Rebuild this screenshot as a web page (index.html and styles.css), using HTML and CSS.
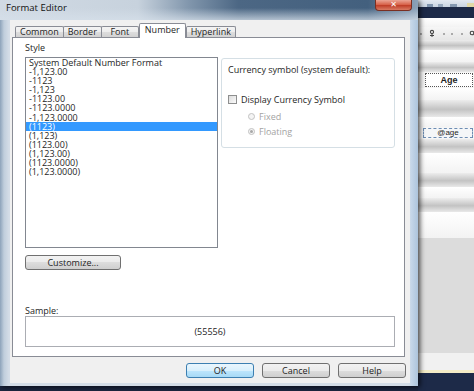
FILE: index.html
```html
<!DOCTYPE html>
<html>
<head>
<meta charset="utf-8">
<meta name="viewport" content="width=device-width, initial-scale=1.0">
<link rel="stylesheet" href="styles.css">
</head>
<body>

<div class="screen">

  <div class="dialog">
    <div class="titlebar">
      <span class="title">Format Editor</span>
      <div class="close">&#x2715;</div>
    </div>

    <div class="client">
      <div class="tabs">
        <div class="tab">Common</div>
        <div class="tab">Border</div>
        <div class="tab tab-font">Font</div>
        <div class="tab tab-active">Number</div>
        <div class="tab">Hyperlink</div>
      </div>

      <div class="panel">
        <div class="panel-top">
          <div class="style-col">
            <div class="label">Style</div>
            <div class="listbox">
              <div class="item">System Default Number Format</div>
              <div class="item">-1,123.00</div>
              <div class="item">-1123</div>
              <div class="item">-1,123</div>
              <div class="item">-1123.00</div>
              <div class="item">-1123.0000</div>
              <div class="item">-1,123.0000</div>
              <div class="item item-selected">(1123)</div>
              <div class="item">(1,123)</div>
              <div class="item">(1123.00)</div>
              <div class="item">(1,123.00)</div>
              <div class="item">(1123.0000)</div>
              <div class="item">(1,123.0000)</div>
            </div>
            <button class="btn btn-customize">Customize...</button>
          </div>

          <div class="group">
            <div class="group-title">Currency symbol (system default):</div>
            <div class="check"><span class="checkbox"></span>Display Currency Symbol</div>
            <div class="radio"><span class="radio-dot"></span>Fixed</div>
            <div class="radio"><span class="radio-dot radio-checked"></span>Floating</div>
          </div>
        </div>

        <div class="sample">
          <div class="label">Sample:</div>
          <div class="sample-box">(55556)</div>
        </div>
      </div>

      <div class="actions">
        <button class="btn btn-action btn-default">OK</button>
        <button class="btn btn-action">Cancel</button>
        <button class="btn btn-action">Help</button>
      </div>
    </div>
  </div>

  <!-- designer window behind the dialog -->
  <div class="app">
    <div class="a-tool">
      <svg width="56" height="7" viewBox="0 0 56 7">
        <rect x="9" y="1" width="6" height="5" fill="#7f94ad"/>
        <rect x="20" y="1" width="5" height="5" fill="#95a7bc"/>
        <rect x="32" y="1" width="7" height="5" fill="#8599b1"/>
        <rect x="49" y="0" width="7" height="6" fill="#e3d9a6"/>
      </svg>
    </div>
    <div class="a-navy"></div>
    <div class="a-white"></div>
    <div class="a-icons">
      <svg width="56" height="13" viewBox="0 0 56 13">
        <circle cx="3" cy="7" r="0.8" fill="#555"/>
        <circle cx="14" cy="5" r="1.6" fill="none" stroke="#444" stroke-width="1.1"/>
        <path d="M12 8.5h4M14 7v3" stroke="#444" stroke-width="1"/>
        <circle cx="26" cy="7" r="0.8" fill="#555"/>
        <circle cx="34" cy="7" r="0.8" fill="#555"/>
        <circle cx="44" cy="7" r="0.8" fill="#555"/>
        <circle cx="54" cy="6" r="1.8" fill="none" stroke="#444" stroke-width="1.1"/>
      </svg>
    </div>
    <div class="a-gray"></div>
    <div class="a-white"></div>
    <div class="a-gray"></div>
    <div class="a-field a-field-label"><div class="field-label">Age</div></div>
    <div class="a-white"></div>
    <div class="a-gray"></div>
    <div class="a-white"></div>
    <div class="a-field a-field-value"><div class="field-value">@age</div></div>
    <div class="a-gray"></div>
    <div class="a-white"></div>
    <div class="a-gray"></div>
    <div class="a-white"></div>
    <div class="a-gray"></div>
    <div class="a-white"></div>
    <div class="a-body"></div>
    <div class="a-status"></div>
    <div class="a-line"></div>
    <div class="a-navy"></div>
  </div>

</div>

</body>
</html>
```

FILE: styles.css
```css
* {
  box-sizing: border-box;
}

body {
  margin: 0;
  font: 9px "Open Sans", "Noto Sans", sans-serif;
  color: #1e1e1e;
}

.screen {
  display: flex;
  align-items: flex-start;
  width: 474px;
  height: 391px;
  overflow: hidden;
  background: #1b2640;
}

/* the dialog window, frame included */
.dialog {
  position: relative;
  z-index: 1;
  flex: none;
  width: 418px;
  height: 386px;
  display: flex;
  flex-direction: column;
  background: linear-gradient(to right, #8da3ba 0px, #c0cedc 4px, #d4dde7 9px, #d4dde7 409px, #c6d7e9 411px, #adc4dc 418px);
  box-shadow: 2px 1px 5px rgba(0, 0, 0, 0.7);
}

.titlebar {
  height: 20px;
  flex: none;
  display: flex;
  align-items: flex-start;
  padding-left: 6px;
  background:
    linear-gradient(to bottom, rgba(220, 229, 238, 0) 40%, rgba(214, 224, 234, 0.75) 100%),
    linear-gradient(to right, #d1dae4 0%, #c7d2dd 33%, #8297ad 45%, #4c6784 57%, #43607e 88%, #8ca2b9 100%);
}

.title {
  margin-top: 2px;
  font-size: 9.5px;
  line-height: 12px;
  color: #101010;
}

.close {
  margin-left: auto;
  margin-right: 6px;
  width: 37px;
  height: 11px;
  border: 1px solid #7a2f22;
  border-top: none;
  border-radius: 0 0 4px 4px;
  background: linear-gradient(#eba595, #d8644c 45%, #c0402a 55%, #d97a62);
  color: #fff;
  font: bold 8px "DejaVu Sans", sans-serif;
  line-height: 10px;
  text-align: center;
}

.client {
  flex: 1;
  margin: 0 8px 3px 10px;
  display: flex;
  flex-direction: column;
  background: #f0f0f0;
}

/* tabs */
.tabs {
  height: 17px;
  flex: none;
  display: flex;
  align-items: flex-end;
  padding-left: 5px;
}

.tab {
  height: 11px;
  min-width: 36px;
  padding: 0 4px;
  margin-right: -1px;
  border: 1px solid #898c95;
  border-bottom: none;
  border-radius: 2px 2px 0 0;
  background: linear-gradient(#f4f4f4, #ececec 50%, #dedede 50%, #d2d2d2);
  line-height: 10px;
  text-align: center;
  white-space: nowrap;
}

.tab-font {
  min-width: 38px;
}

.tab-active {
  position: relative;
  z-index: 1;
  height: 15px;
  margin: 0 0 -1px 1px;
  padding: 0 5px;
  background: #fff;
  line-height: 11px;
}

.panel {
  height: 320px;
  margin-left: 2px;
  width: 393px;
  display: flex;
  flex-direction: column;
  padding: 4px 9px 9px 12px;
  border: 1px solid #898c95;
  background: #fff;
}

.panel-top {
  display: flex;
  gap: 3px;
}

.style-col {
  width: 193px;
  display: flex;
  flex-direction: column;
  align-items: flex-start;
}

.label {
  line-height: 12px;
  margin-bottom: 3px;
}

.listbox {
  width: 193px;
  height: 191px;
  border: 1px solid #828790;
  background: #fff;
}

.item {
  height: 9.1px;
  padding-left: 3px;
  line-height: 9.1px;
  white-space: nowrap;
}

.item-selected {
  background: #3399ff;
  color: #fff;
}

/* currency group */
.group {
  width: 174px;
  height: 90px;
  margin-top: 16px;
  padding: 5px 6px 0;
  border: 1px solid #d5dfe5;
  border-radius: 3px;
}

.group-title {
  line-height: 11px;
  margin-bottom: 19px;
}

.check,
.radio {
  display: flex;
  align-items: center;
  height: 11px;
}

.check {
  margin-bottom: 6px;
}

.radio {
  margin: 0 0 4px 20px;
  color: #a3a3a3;
}

.checkbox {
  width: 9px;
  height: 9px;
  margin-right: 4px;
  border: 1px solid #8e8f8f;
  background: linear-gradient(135deg, #dcdcdc, #fbfbfb);
}

.radio-dot {
  position: relative;
  width: 7px;
  height: 7px;
  margin-right: 4px;
  border: 1px solid #c2c2c2;
  border-radius: 50%;
  background: #f4f4f4;
}

/* the dot lies over the circle */
.radio-checked::after {
  content: "";
  position: absolute;
  left: 1px;
  top: 1px;
  width: 3px;
  height: 3px;
  border-radius: 50%;
  background: #a8a8a8;
}

/* sample */
.sample {
  margin-top: auto;
}

.sample .label {
  line-height: 10px;
  margin-bottom: 0;
}

.sample-box {
  height: 31px;
  display: flex;
  align-items: center;
  justify-content: center;
  border: 1px solid #abadb3;
  background: #fff;
}

/* buttons */
.btn {
  height: 15px;
  padding: 0;
  border: 1px solid #707070;
  border-radius: 3px;
  background: linear-gradient(#f2f2f2, #ebebeb 50%, #dddddd 50%, #cfcfcf);
  font: inherit;
  line-height: 13px;
  color: #1e1e1e;
}

.btn-customize {
  width: 96px;
  margin-top: 7px;
}

.actions {
  display: flex;
  justify-content: flex-end;
  gap: 8px;
  margin-top: 6px;
  padding-right: 4px;
}

.btn-action {
  width: 68px;
}

.btn-default {
  border-color: #3c7fb1;
  background: linear-gradient(#eaf6fd, #d9f0fc 50%, #bee6fd 50%, #a7d9f5);
}

/* window behind */
.app {
  flex: 1;
  height: 391px;
  display: grid;
  grid-template-rows: 7px 11px 9px 13px 10px 12px 10px 16px 12px 17px 10px 12px 14px 20px 14px 11px 14px 26px 115px 17px 3px 1fr;
  background: #fafafa;
}

.a-tool {
  background: linear-gradient(#e3e9f1, #c9d4e1);
}

.a-navy {
  background: #1d2a48;
}

.a-white {
  background: linear-gradient(#ffffff, #f3f3f3);
}

.a-icons {
  background: linear-gradient(#f6f6f6, #e6e6e6);
}

.a-gray {
  background: linear-gradient(#ededed, #c3c3c3 55%, #e9e9e9);
}

.a-field {
  background: #f6f6f6;
}

.a-field-label {
  padding: 1px 1px 1px 7px;
}

.a-field-value {
  padding: 1px 1px 1px 5px;
}

.field-label {
  height: 14px;
  border: 1px dotted #555;
  background: #fff;
  font: bold 9px "Liberation Sans", Arial, sans-serif;
  line-height: 12px;
  text-align: center;
}

.field-value {
  height: 10px;
  border: 1px dashed #6d8db3;
  background: #f4f6f8;
  font: 8px "Liberation Sans", Arial, sans-serif;
  line-height: 8px;
  text-align: center;
}

.a-body {
  background: #dcdcdc;
}

.a-status {
  background: #f1f1f1;
}

.a-line {
  background: #f3ebc6;
}
```
